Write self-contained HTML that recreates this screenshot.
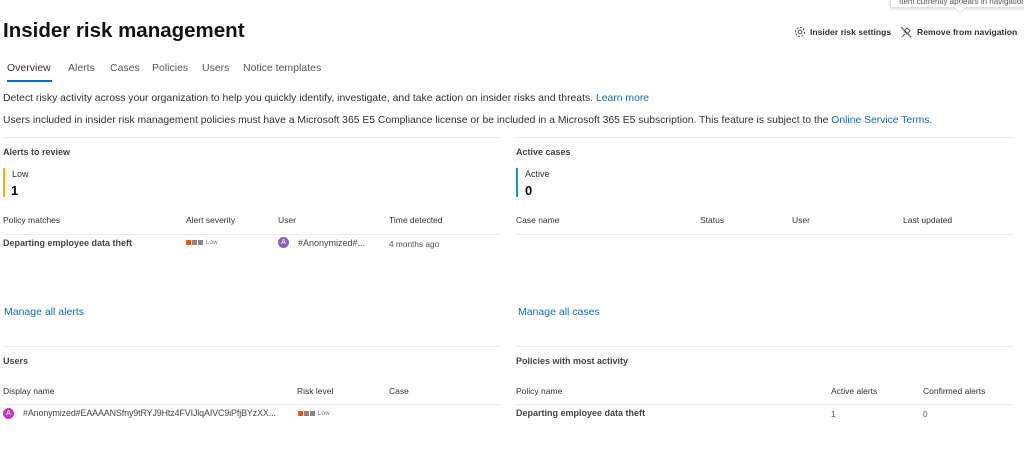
<!DOCTYPE html>
<html><head><style>
*{margin:0;padding:0;box-sizing:border-box}
body{width:1024px;height:461px;background:#fff;font-family:"Liberation Sans",sans-serif;color:#323130;position:relative;overflow:hidden}
.a{position:absolute;white-space:nowrap}
.s{font-size:8.5px;color:#323130}
.h{font-size:9px;font-weight:bold;color:#444}
.l{position:absolute;height:1px;background:#edebe9}
.link{color:#0f6cbd}
.sev{display:inline-block;width:5px;height:5px;background:#8a8886;margin-right:1px;vertical-align:middle}
</style></head><body>
<div class="a" style="left:890px;top:-6px;width:140px;height:14px;border:1px solid #e1dfdd;background:#fff;box-shadow:0 1px 3px rgba(0,0,0,.15);font-size:8px;color:#555;padding:2px 8px">Item currently appears in navigation.</div>
<div class="a" style="left:956px;top:4px;width:8px;height:8px;background:#fff;transform:rotate(45deg);border-right:1px solid #e1dfdd;border-bottom:1px solid #e1dfdd"></div>
<div class="a" style="left:3px;top:19px;font-size:20.5px;font-weight:bold;color:#111">Insider risk management</div>
<svg class="a" style="left:794px;top:26px" width="12" height="12" viewBox="0 0 12 12"><circle cx="6" cy="6" r="2" fill="none" stroke="#555"/><circle cx="6" cy="6" r="4.5" fill="none" stroke="#555" stroke-dasharray="2 1.5"/></svg>
<div class="a" style="left:810px;top:27px;font-size:8.6px;font-weight:bold;color:#333">Insider risk settings</div>
<svg class="a" style="left:900px;top:26px" width="12" height="12" viewBox="0 0 12 12"><path d="M2 11L5 8M4 5L7 2L10 5L7 8ZM1 1L11 11" fill="none" stroke="#555"/></svg>
<div class="a" style="left:917px;top:27px;font-size:8.6px;font-weight:bold;color:#333">Remove from navigation</div>
<div class="a" style="left:7px;top:62px;font-size:10.5px;color:#333">Overview</div>
<div class="a" style="left:7px;top:80px;width:45px;height:2px;background:#0f6cbd"></div>
<div class="a" style="left:68px;top:62px;font-size:10.5px;color:#555">Alerts</div>
<div class="a" style="left:110px;top:62px;font-size:10.5px;color:#555">Cases</div>
<div class="a" style="left:152px;top:62px;font-size:10.5px;color:#555">Policies</div>
<div class="a" style="left:202px;top:62px;font-size:10.5px;color:#555">Users</div>
<div class="a" style="left:243px;top:62px;font-size:10.5px;color:#555">Notice templates</div>
<div class="a" style="left:3px;top:93px;font-size:10.4px">Detect risky activity across your organization to help you quickly identify, investigate, and take action on insider risks and threats. <span class="link">Learn more</span></div>
<div class="a" style="left:3px;top:115px;font-size:10.35px">Users included in insider risk management policies must have a Microsoft 365 E5 Compliance license or be included in a Microsoft 365 E5 subscription. This feature is subject to the <span class="link">Online Service Terms</span>.</div>
<div class="l" style="left:3px;top:137px;width:497px"></div>
<div class="l" style="left:516px;top:137px;width:498px"></div>
<div class="a h" style="left:3px;top:147px">Alerts to review</div>
<div class="a" style="left:3px;top:168px;width:2px;height:29px;background:#f2b600"></div>
<div class="a" style="left:12px;top:169px;font-size:9px">Low</div>
<div class="a" style="left:11px;top:183px;font-size:13px;font-weight:bold;color:#000">1</div>
<div class="a s" style="left:3px;top:215px">Policy matches</div>
<div class="a s" style="left:186px;top:215px">Alert severity</div>
<div class="a s" style="left:278px;top:215px">User</div>
<div class="a s" style="left:389px;top:215px">Time detected</div>
<div class="l" style="left:3px;top:234px;width:497px"></div>
<div class="a" style="left:3px;top:238px;font-size:9px;font-weight:bold;color:#444">Departing employee data theft</div>
<div class="a" style="left:186px;top:239px;font-size:6.5px;color:#777"><span class="sev" style="background:#e8590c"></span><span class="sev"></span><span class="sev"></span> Low</div>
<div class="a" style="left:278px;top:237px;width:11px;height:11px;border-radius:50%;background:#8764b8;color:#fff;font-size:7px;text-align:center;line-height:11px">A</div>
<div class="a" style="left:298px;top:238px;font-size:9px;color:#444">#Anonymized#...</div>
<div class="a" style="left:389px;top:239px;font-size:8.3px;color:#555">4 months ago</div>
<div class="a link" style="left:4px;top:306px;font-size:10.5px">Manage all alerts</div>
<div class="a h" style="left:516px;top:147px">Active cases</div>
<div class="a" style="left:516px;top:168px;width:2px;height:29px;background:#00a2ad"></div>
<div class="a" style="left:525px;top:169px;font-size:9px">Active</div>
<div class="a" style="left:525px;top:183px;font-size:13px;font-weight:bold;color:#000">0</div>
<div class="a s" style="left:516px;top:215px">Case name</div>
<div class="a s" style="left:700px;top:215px">Status</div>
<div class="a s" style="left:792px;top:215px">User</div>
<div class="a s" style="left:903px;top:215px">Last updated</div>
<div class="l" style="left:516px;top:234px;width:498px"></div>
<div class="a link" style="left:518px;top:306px;font-size:10.5px">Manage all cases</div>
<div class="l" style="left:3px;top:346px;width:497px"></div>
<div class="l" style="left:516px;top:346px;width:498px"></div>
<div class="a h" style="left:3px;top:356px">Users</div>
<div class="a s" style="left:3px;top:386px">Display name</div>
<div class="a s" style="left:297px;top:386px">Risk level</div>
<div class="a s" style="left:389px;top:386px">Case</div>
<div class="l" style="left:3px;top:404px;width:497px"></div>
<div class="a" style="left:3px;top:408px;width:11px;height:11px;border-radius:50%;background:#c239b3;color:#fff;font-size:7px;text-align:center;line-height:11px">A</div>
<div class="a" style="left:23px;top:408px;font-size:8.9px;color:#444;letter-spacing:-0.1px">#Anonymized#EAAAANSfny9tRYJ9Htz4FVIJlqAIVC9iPfjBYzXX...</div>
<div class="a" style="left:298px;top:410px;font-size:6.5px;color:#777"><span class="sev" style="background:#e8590c"></span><span class="sev"></span><span class="sev"></span> Low</div>
<div class="a h" style="left:516px;top:356px">Policies with most activity</div>
<div class="a s" style="left:516px;top:386px">Policy name</div>
<div class="a s" style="left:831px;top:386px">Active alerts</div>
<div class="a s" style="left:923px;top:386px">Confirmed alerts</div>
<div class="l" style="left:516px;top:404px;width:498px"></div>
<div class="a" style="left:516px;top:408px;font-size:9px;font-weight:bold;color:#444">Departing employee data theft</div>
<div class="a" style="left:831px;top:409px;font-size:8.3px;color:#555">1</div>
<div class="a" style="left:923px;top:409px;font-size:8.3px;color:#555">0</div>
</body></html>
